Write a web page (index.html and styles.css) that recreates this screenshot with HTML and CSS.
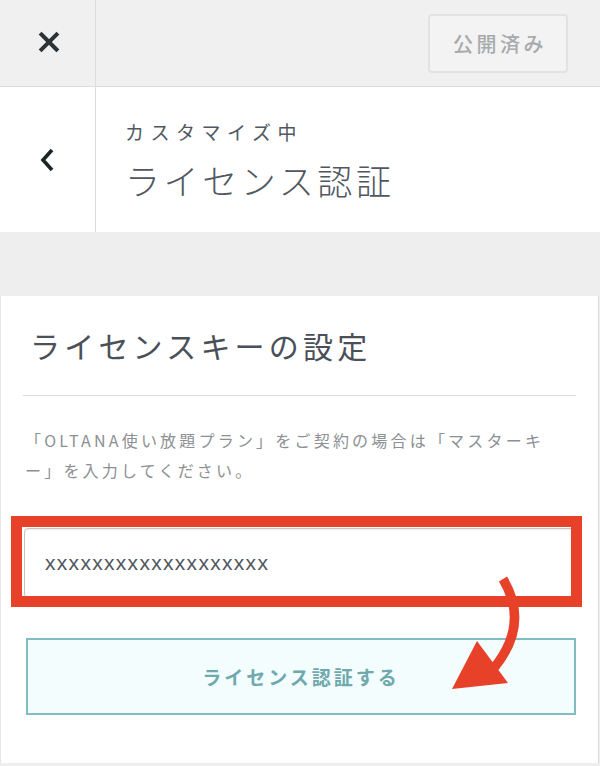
FILE: index.html
```html
<!DOCTYPE html>
<html lang="ja">
<head>
    <meta charset="UTF-8">
    <meta name="viewport" content="width=device-width, initial-scale=1.0">
    <title>ライセンス認証</title>
    <link rel="stylesheet" href="styles.css">
</head>
<body>

    <!-- 上部バー -->
    <div class="topbar">
        <div class="close-cell">
            <svg width="24" height="24" viewBox="0 0 24 24"><path d="M4.5 4.5L19.5 19.5M19.5 4.5L4.5 19.5" stroke="#2c3338" stroke-width="4" stroke-linecap="square"/></svg>
        </div>
        <div class="topbar-right">
            <button class="publish">公開済み</button>
        </div>
    </div>

    <!-- 見出し -->
    <div class="head">
        <div class="back-cell">
            <svg width="16" height="26" viewBox="0 0 16 26"><path d="M12 3L3 13L12 23" fill="none" stroke="#1d2327" stroke-width="3.6"/></svg>
        </div>
        <div class="head-title">
            <div class="sub">カスタマイズ中</div>
            <div class="title">ライセンス認証</div>
        </div>
    </div>

    <div class="band"></div>

    <!-- 設定パネル -->
    <div class="panel">
        <h2 class="panel-title">ライセンスキーの設定</h2>
        <hr class="line">
        <p class="desc">「OLTANA使い放題プラン」をご契約の場合は「マスターキ<br>ー」を入力してください。</p>
        <input class="key" type="text" value="xxxxxxxxxxxxxxxxxxx">
        <button class="auth">ライセンス認証する</button>

        <!-- 注釈 -->
        <div class="mark"></div>
        <svg class="arrow" width="600" height="766" viewBox="0 0 600 766">
            <path d="M503 579 Q530 624 494 668" fill="none" stroke="#e8412a" stroke-width="9.5"/>
            <polygon points="477,641 508,683 452,689" fill="#e8412a"/>
        </svg>
    </div>

</body>
</html>
```

FILE: styles.css
```css
body {
    margin: 0;
    background: #eeeeee;
    font-family: "Noto Sans CJK JP", sans-serif;
    color: #50575e;
    width: 600px;
    height: 766px;
    overflow: hidden;
}

.topbar {
    display: flex;
    height: 86px;
    background: #f0f0f0;
    border-bottom: 1px solid #dcdcde;
}

.close-cell,
.back-cell {
    width: 95px;
    border-right: 1px solid #dcdcde;
    display: flex;
    align-items: center;
    justify-content: center;
    flex-shrink: 0;
}

.close-cell svg {
    margin: 0 0 2px 2px;
}

.topbar-right {
    flex: 1;
    display: flex;
    justify-content: flex-end;
    align-items: flex-start;
    padding: 14px 32px 0 0;
}

.publish {
    width: 140px;
    height: 59px;
    border: 2px solid #e2e2e3;
    border-radius: 4px;
    background: #f3f3f3;
    color: #a7aaad;
    font-family: "Noto Sans CJK JP", sans-serif;
    font-size: 20px;
    font-weight: 500;
    letter-spacing: 3.5px;
    padding: 0 0 0 4px;
}

.head {
    display: flex;
    height: 145px;
    background: #fff;
}

.head-title {
    padding: 31px 0 0 29px;
}

.sub {
    font-size: 19px;
    letter-spacing: 6.5px;
    line-height: 28px;
}

.title {
    font-size: 35px;
    font-weight: 300;
    letter-spacing: 3.6px;
    line-height: 50px;
    margin-top: 9px;
}

.band {
    height: 64px;
}

.panel {
    position: relative;
    width: 553px;
    background: #fff;
    padding: 24px 22px 48px;
    border-left: 1px solid #e6e6e6;
    border-right: 1px solid #dcdcde;
}

.panel-title {
    margin: 0 0 25px 7px;
    font-size: 30px;
    font-weight: normal;
    letter-spacing: 4.2px;
    line-height: 50px;
    color: #4a5057;
}

.line {
    margin: 0;
    border: 0;
    border-top: 1px solid #dcdcde;
}

.desc {
    margin: 29px 0 0 2px;
    font-size: 16px;
    letter-spacing: 3.2px;
    line-height: 30px;
    color: #8c8f94;
    white-space: nowrap;
}

.key {
    display: block;
    box-sizing: border-box;
    width: 553px;
    height: 70px;
    margin: 43px 0 0 1px;
    padding: 0 20px;
    border: 1px solid #c3c4c7;
    border-radius: 4px;
    box-shadow: inset 0 1px 2px rgba(0, 0, 0, 0.07);
    font-family: "Liberation Sans", sans-serif;
    font-size: 21px;
    letter-spacing: 1.3px;
    color: #50575e;
}

.auth {
    display: block;
    width: 550px;
    height: 77px;
    margin: 40px 0 0 3px;
    border: 2px solid #80bcc0;
    background: #f4fdfe;
    color: #6fa9ad;
    font-family: "Noto Sans CJK JP", sans-serif;
    font-size: 19px;
    font-weight: 600;
    letter-spacing: 3px;
}

/* 赤枠 */
.mark {
    position: absolute;
    left: 10px;
    top: 220px;
    width: 549px;
    height: 69px;
    border: 11px solid #e8412a;
}

.arrow {
    position: absolute;
    left: -1px;
    top: -296px;
    pointer-events: none;
}
```
